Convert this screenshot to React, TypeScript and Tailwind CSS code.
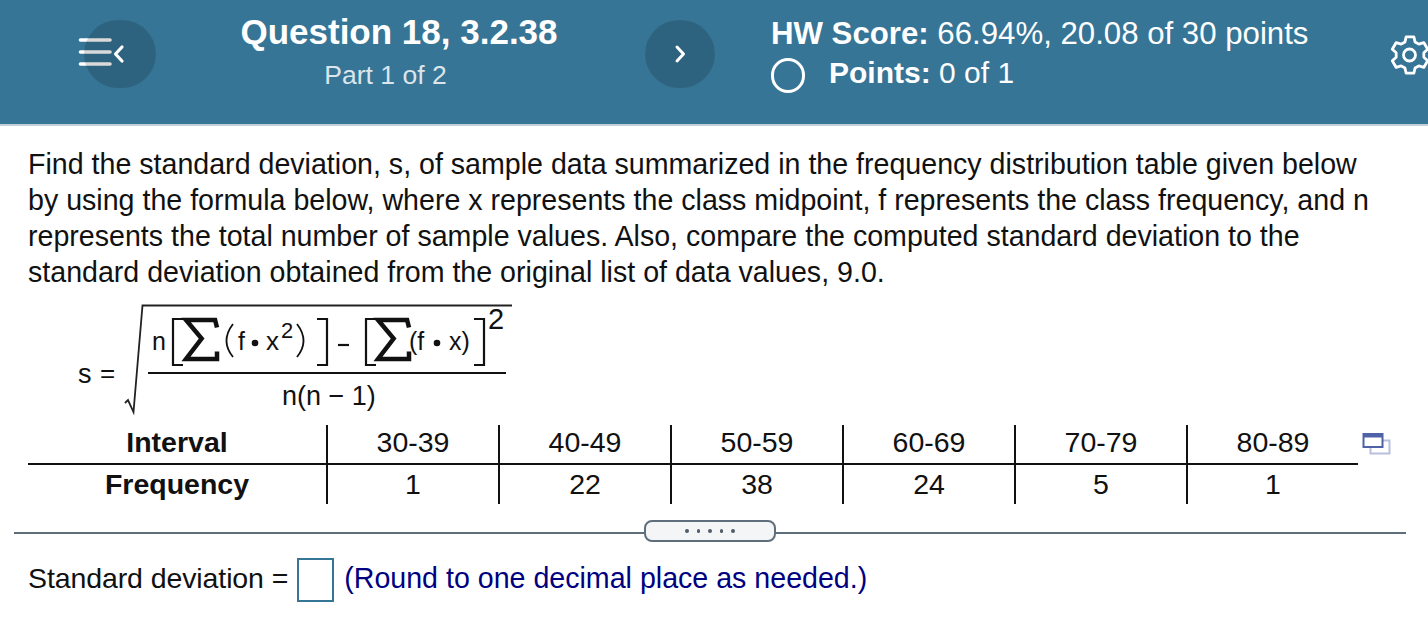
import React from "react";

const FONT = "font-['Liberation_Sans',Arial,sans-serif]";

function Sigma({ x, w, y, h }: { x: number; w: number; y: number; h: number }) {
  return (
    <path
      d={`M${x + w} ${y + h * 0.22} L${x + w * 0.94} ${y + 2} L${x + 1} ${y + 2} L${x + w * 0.52} ${y + h * 0.48} L${x + 1} ${y + h - 2} L${x + w} ${y + h - 2} L${x + w} ${y + h * 0.78}`}
      fill="none"
      stroke="#111"
      strokeWidth="4.5"
    />
  );
}

function Formula() {
  const t = { fontFamily: "'Liberation Sans', Arial, sans-serif", fill: "#111" };
  return (
    <svg width="520" height="120" viewBox="0 0 520 120" className="block">
      <g transform="translate(0,-300)">
        <text x="78" y="383" fontSize="27" {...t}>s</text>
        <text x="100" y="382" fontSize="26" {...t}>=</text>
        <path d="M125 403 L128 400 L133.500 412 L142.500 305.500 H512" fill="none" stroke="#222" strokeWidth="1.8" />
        <path d="M148 373 H506" stroke="#111" strokeWidth="2" />
        <text x="152" y="350" fontSize="25" {...t}>n</text>
        <path d="M183 319 H173 V365 H183" fill="none" stroke="#111" strokeWidth="2.2" />
        <Sigma x={185} w={32} y={318} h={43} />
        <path d="M233 324 Q220 341 233 357" fill="none" stroke="#111" strokeWidth="1.8" />
        <text x="238" y="350" fontSize="25" {...t}>f</text>
        <circle cx="255" cy="343" r="3.300" fill="#111" />
        <text x="266" y="350" fontSize="26" {...t}>x</text>
        <text x="281" y="338" fontSize="22" {...t}>2</text>
        <path d="M297 324 Q310 341 297 357" fill="none" stroke="#111" strokeWidth="1.8" />
        <path d="M317 319 H327 V365 H317" fill="none" stroke="#111" strokeWidth="2.2" />
        <path d="M338 345 H349" stroke="#111" strokeWidth="2.2" />
        <path d="M376 319 H366 V365 H376" fill="none" stroke="#111" strokeWidth="2.2" />
        <Sigma x={377} w={32} y={318} h={43} />
        <text x="409" y="350" fontSize="25" {...t}>(f</text>
        <circle cx="437" cy="343" r="3.300" fill="#111" />
        <text x="449" y="350" fontSize="25" {...t}>x)</text>
        <path d="M474 319 H484 V365 H474" fill="none" stroke="#111" strokeWidth="2.2" />
        <text x="488" y="329" fontSize="29" {...t}>2</text>
        <text x="282" y="405" fontSize="27" {...t}>n(n − 1)</text>
      </g>
    </svg>
  );
}

function gearPath() {
  const pts: string[] = [];
  const p = (r: number, deg: number) => {
    const a = (deg * Math.PI) / 180;
    return `${(20 + r * Math.cos(a)).toFixed(2)} ${(20 + r * Math.sin(a)).toFixed(2)}`;
  };
  for (let k = 0; k < 6; k++) {
    const c = -90 + 60 * k;
    pts.push(p(14, c - 21), p(18.6, c - 12), p(18.6, c + 12), p(14, c + 21));
  }
  return "M" + pts.join(" L") + " Z";
}

const rows = {
  intervals: ["30-39", "40-49", "50-59", "60-69", "70-79", "80-89"],
  freqs: ["1", "22", "38", "24", "5", "1"],
};

export default function App() {
  return (
    <div className={`${FONT} w-[1428px] h-[628px] bg-white overflow-hidden text-[#111]`}>
      <header className="h-[126px] bg-[#367596] border-b-2 border-[#c3d0d8] flex text-white overflow-hidden">
        <div className="w-[240px] shrink-0 pl-[78px] pt-[20px] flex">
          <div className="relative w-[78px] h-[68px]">
            <svg className="absolute left-0 top-0" width="78" height="68" viewBox="0 0 78 68">
              <path d="M2.500 20 H32 M2.500 32 H32 M2.500 44 H32" stroke="#fff" strokeWidth="3.600" strokeLinecap="round" />
            </svg>
            <div className="absolute left-[6px] top-0 w-[72px] h-[68px] rounded-full bg-black/15" />
            <svg className="absolute left-0 top-0" width="78" height="68" viewBox="0 0 78 68">
              <path d="M44 27 L37.500 34 L44 41" fill="none" stroke="#fff" strokeWidth="3.200" strokeLinejoin="round" strokeLinecap="round" />
            </svg>
          </div>
        </div>
        <div className="w-[405px] shrink-0 flex flex-col">
          <div className="w-[318px] text-center font-bold text-[35px] leading-[40px] mt-[12px] whitespace-nowrap">Question 18, 3.2.38</div>
          <div className="w-[291px] text-center text-[26.5px] leading-[30px] mt-[8px] text-[#dce5ec]">Part 1 of 2</div>
        </div>
        <div className="w-[126px] shrink-0 pt-[20px]">
          <div className="w-[70px] h-[68px] rounded-full bg-black/15 flex items-center justify-center">
            <svg width="14" height="20" viewBox="0 0 14 20">
              <path d="M4 3 L10.500 10 L4 17" fill="none" stroke="#fff" strokeWidth="3" strokeLinecap="round" strokeLinejoin="round" />
            </svg>
          </div>
        </div>
        <div className="w-[619px] shrink-0 flex flex-col">
          <div className="text-[31.2px] leading-[36px] mt-[16px] whitespace-nowrap">
            <span className="font-bold">HW Score:</span> 66.94%, 20.08 of 30 points
          </div>
          <div className="flex items-center mt-[4px] h-[38px]">
            <div className="w-[34px] h-[35px] rounded-full border-[3.5px] border-white" />
            <div className="ml-[24px] text-[30px] pb-[5px] whitespace-nowrap"><span className="font-bold">Points:</span> 0 of 1</div>
          </div>
        </div>
        <div className="pt-[35px] shrink-0">
          <svg className="block" width="40" height="40" viewBox="0 0 40 40" fill="none" stroke="#fff" strokeWidth="2.800" strokeLinejoin="round">
            <path d={gearPath()} />
            <circle cx="19.500" cy="20" r="6" />
          </svg>
        </div>
      </header>

      <main className="pl-[28px]">
        <p className="mt-[20px] w-[1390px] text-[28.6px] leading-[36px]">
          Find the standard deviation, s, of sample data summarized in the frequency distribution table given below
          <br />
          by using the formula below, where x represents the class midpoint, f represents the class frequency, and n
          <br />
          represents the total number of sample values. Also, compare the computed standard deviation to the
          <br />
          standard deviation obtained from the original list of data values, 9.0.
        </p>
        <div className="-ml-[28px] mt-[10px] h-[120px]">
          <Formula />
        </div>
        <div className="flex">
          <div className="grid grid-cols-[298px_repeat(6,172px)] grid-rows-[40px_39px] w-[1330px] text-[28.5px] mt-[5px]">
            <div className="border-b-2 border-[#111] font-bold flex items-center justify-center pb-[3px]">Interval</div>
            {rows.intervals.map((v) => (
              <div key={v} className="border-l-2 border-b-2 border-[#111] flex items-center justify-center pb-[3px]">{v}</div>
            ))}
            <div className="font-bold flex items-center justify-center pb-[1px]">Frequency</div>
            {rows.freqs.map((v, i) => (
              <div key={i} className="border-l-2 border-[#111] flex items-center justify-center pb-[1px]">{v}</div>
            ))}
          </div>
          <svg className="ml-[4px] mt-[12px]" width="30" height="24" viewBox="0 0 30 24">
            <rect x="8.500" y="8.500" width="19" height="13" fill="none" stroke="#b9c0dc" strokeWidth="2" />
            <rect x="1.500" y="2" width="19" height="13" fill="#fff" stroke="#4f62a8" strokeWidth="2" />
            <path d="M1.500 4 H20.500" stroke="#4f62a8" strokeWidth="3" />
          </svg>
        </div>
        <div className="-ml-[14px] mt-[16px] w-[1392px] h-[22px] flex items-center">
          <div className="flex-1 h-[2px] mt-[4px] bg-[#5f6e7c]" />
          <div className="w-[132px] h-[22px] rounded-[8px] border-2 border-[#5f6e7c] bg-[#f3f5f7] flex items-center justify-center gap-[8px]">
            {[0, 1, 2, 3, 4].map((i) => (
              <span key={i} className="w-[3.500px] h-[3.500px] rounded-full bg-[#4f5d6a]" />
            ))}
          </div>
          <div className="w-[630px] h-[2px] mt-[4px] bg-[#5f6e7c]" />
        </div>
        <div className="mt-[16px] flex items-center text-[28.5px] h-[44px]">
          <span className="pb-[4px] tracking-[-0.1px]">Standard deviation =</span>
          <span className="ml-[9px] w-[37px] h-[44px] border-2 border-[#367596]" />
          <span className="ml-[10px] pb-[4px] text-[28.6px] text-[#000080]">(Round to one decimal place as needed.)</span>
        </div>
      </main>
    </div>
  );
}
